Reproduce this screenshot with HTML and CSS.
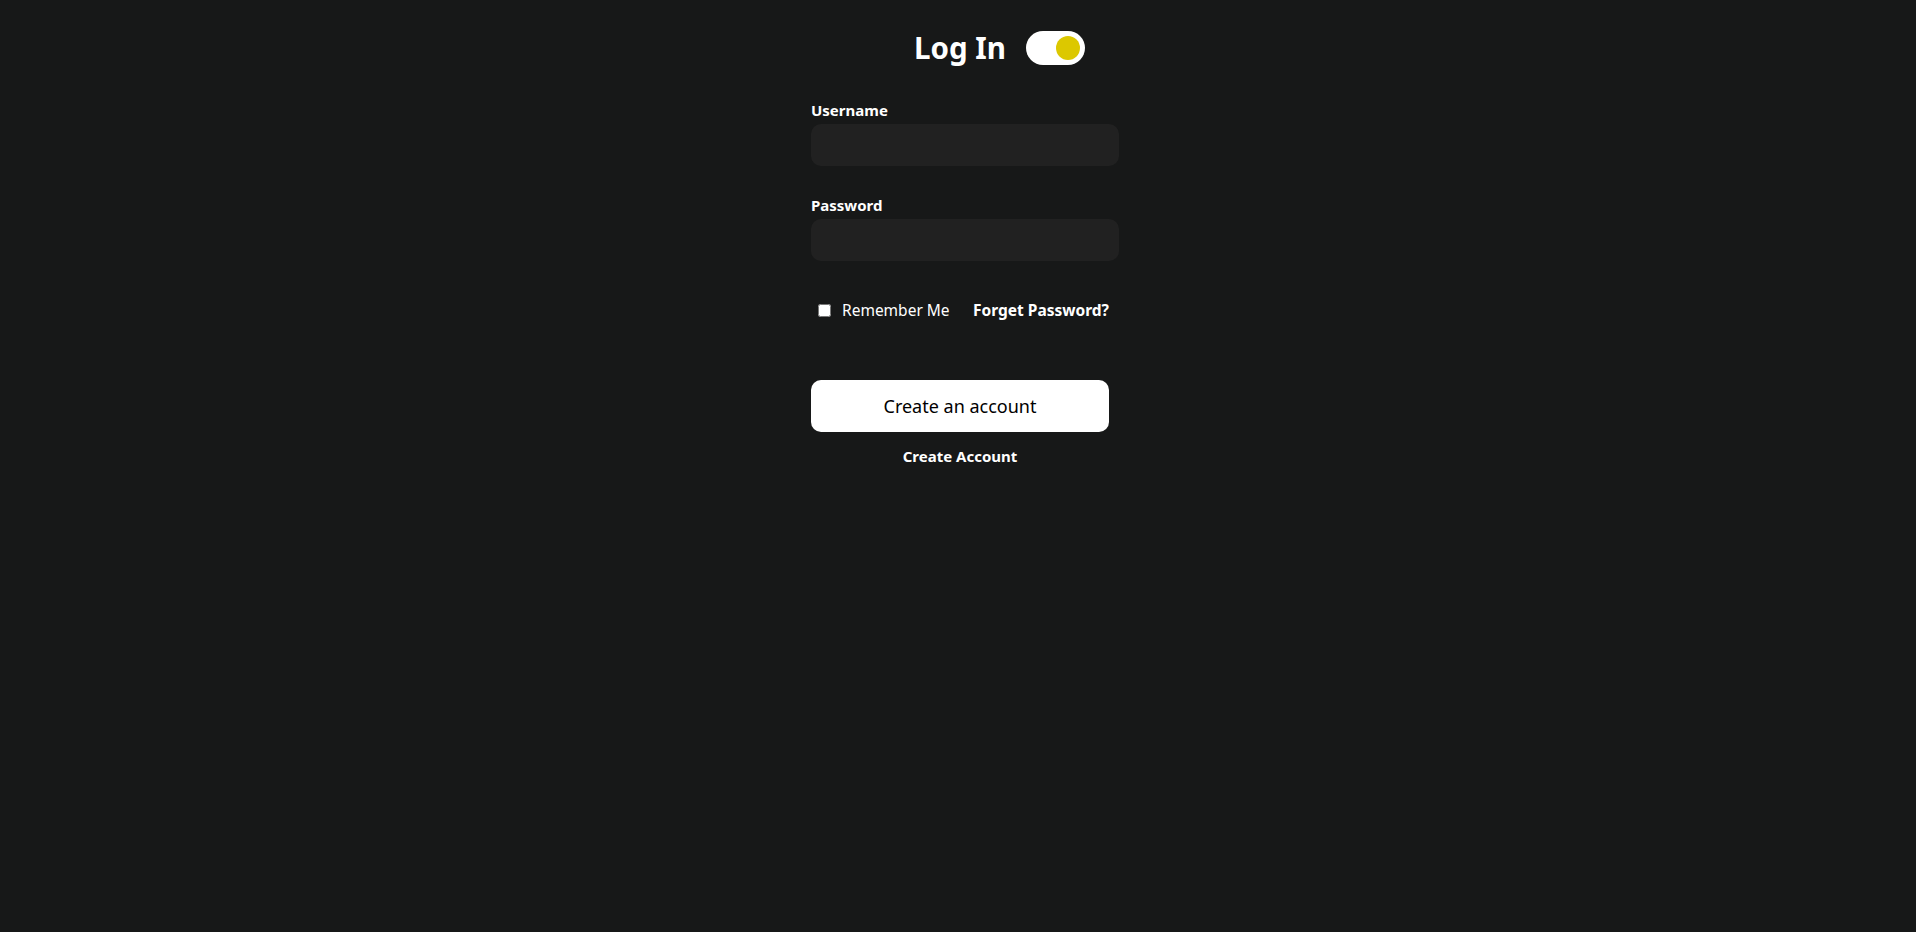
FILE: index.html
```html
<!DOCTYPE html>
<html lang="en">

<head>
  <title>Log In</title>
  <meta charset="UTF-8" />
  <meta name="viewport" content="width=device-width,initial-scale=1" />
  <link rel="stylesheet" href="styles.css">
</head>

<body>
  <div class="login">
    <div class="login-head">
      <h1 class="login-title">Log In</h1>
      <label class="toggle">
        <input type="checkbox" checked />
        <span class="toggle-knob"></span>
      </label>
    </div>

    <form class="login-form" onsubmit="return false">
      <label class="field-label" for="username">Username</label>
      <input id="username" class="field-input" type="text" />

      <label class="field-label second" for="password">Password</label>
      <input id="password" class="field-input" type="password" />

      <div class="options-row">
        <label class="remember">
          <input type="checkbox" class="remember-box" />
          <span>Remember Me</span>
        </label>
        <a href="#" class="forget-link">Forget Password?</a>
      </div>

      <button class="create-button" type="button">Create an account</button>
      <a href="#" class="create-link">Create Account</a>
    </form>
  </div>
</body>

</html>
```

FILE: styles.css
```css
body,
html {
  margin: 0;
  padding: 0;
  border: 0;
}

body {
  background: #171818;
  color: #fff;
  font-family: "Noto Sans", "Open Sans", sans-serif;
  min-height: 100vh;
}

.login {
  width: 322px;
  box-sizing: border-box;
  padding-left: 14px;
  margin: 0 auto;
}

.login-head {
  display: flex;
  align-items: center;
  gap: 20px;
  margin-top: 31px;
  margin-left: 103px;
}

.login-title {
  margin: 0;
  font-size: 29.5px;
  line-height: 34px;
  font-weight: 700;
  letter-spacing: 0;
}

.toggle {
  position: relative;
  display: block;
  width: 59px;
  height: 34px;
  border-radius: 17px;
  background: #fff;
  cursor: pointer;
}

.toggle input {
  display: none;
}

.toggle-knob {
  position: absolute;
  top: 5px;
  right: 5px;
  width: 24px;
  height: 24px;
  border-radius: 50%;
  background: #dcc800;
}

.login-form {
  display: flex;
  flex-direction: column;
  width: 308px;
}

.field-label {
  display: block;
  font-size: 15px;
  line-height: 18px;
  font-weight: 700;
  margin-top: 36px;
  margin-bottom: 5px;
}

.field-label.second {
  margin-top: 30px;
}

.field-input {
  height: 42px;
  box-sizing: border-box;
  border: 0;
  border-radius: 10px;
  background: #212121;
  color: #fff;
  padding: 0 12px;
  font-family: inherit;
  font-size: 15px;
  outline: none;
}

.options-row {
  display: flex;
  align-items: center;
  margin-top: 39px;
  width: 298px;
  height: 20px;
}

.remember {
  display: flex;
  align-items: center;
  font-size: 15.5px;
  color: #fff;
}

.remember-box {
  width: 13px;
  height: 13px;
  margin: 0 11px 0 7px;
}

.forget-link {
  margin-left: auto;
  color: #fff;
  text-decoration: none;
  font-size: 15.5px;
  font-weight: 700;
}

.create-button {
  margin-top: 60px;
  width: 298px;
  height: 52px;
  border: 0;
  border-radius: 10px;
  background: #fff;
  color: #000;
  font-family: inherit;
  font-size: 18px;
  cursor: pointer;
}

.create-link {
  width: 298px;
  margin-top: 15px;
  text-align: center;
  color: #fff;
  text-decoration: none;
  font-size: 15px;
  line-height: 18px;
  font-weight: 700;
}
```
